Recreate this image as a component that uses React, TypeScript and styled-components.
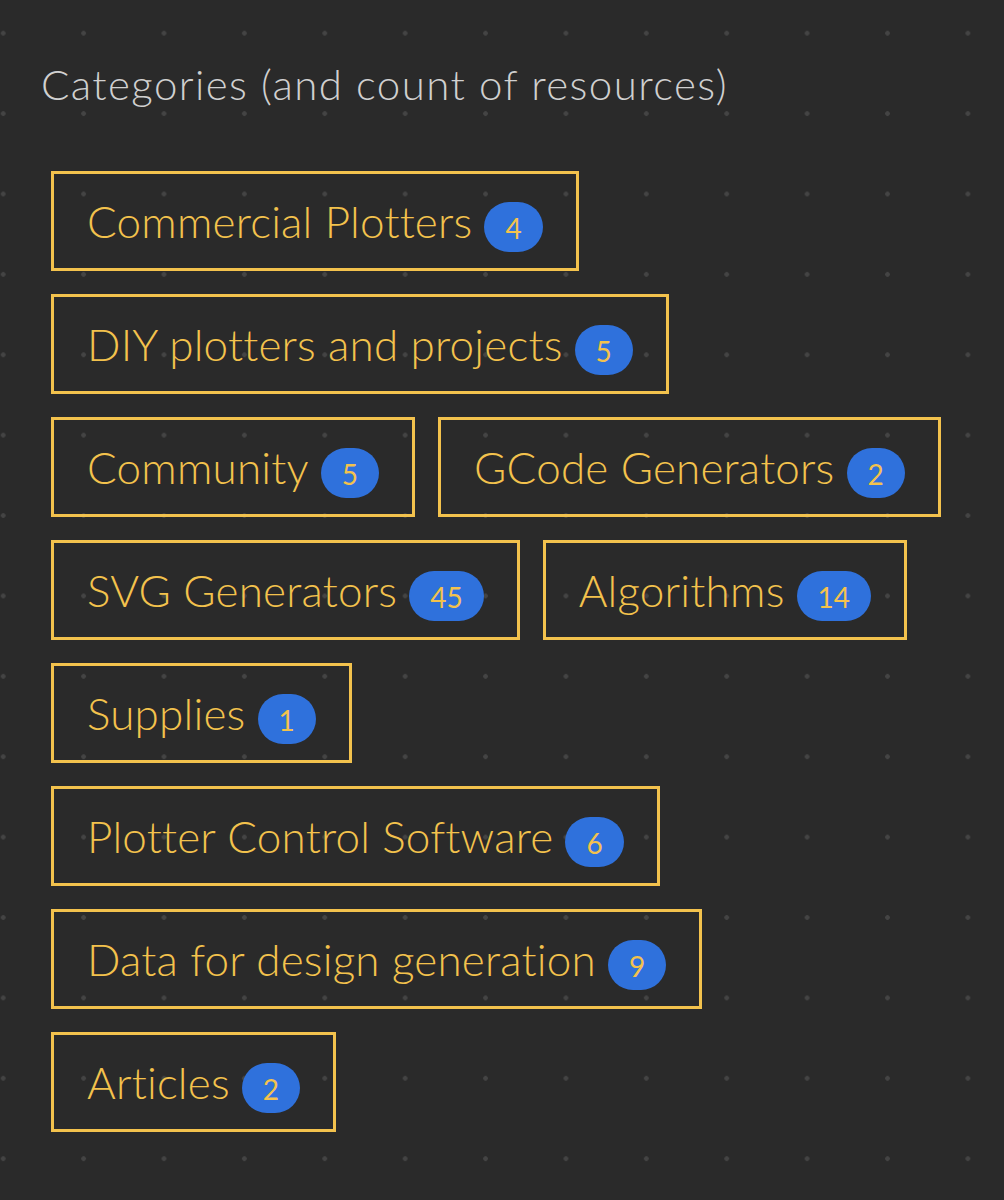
import styled, { createGlobalStyle } from 'styled-components';

const GlobalStyle = createGlobalStyle`
  html, body {
    margin: 0;
    padding: 0;
    background-color: #2a2a2a;
  }
  body {
    font-family: Raleway, Lato, 'Open Sans', sans-serif;
  }
`;

const Page = styled.div`
  min-height: 1200px;
  box-sizing: border-box;
  padding: 56px 0 0 41px;
  background-color: #2a2a2a;
  background-image: radial-gradient(circle, #444444 2px, transparent 2.6px);
  background-size: 80.4px 80.4px;
  background-position: -37px -7px;
`;

const Title = styled.h2`
  margin: 0 0 59px;
  font-family: Lato, sans-serif;
  font-weight: 300;
  font-size: 42px;
  line-height: 56px;
  color: #d0d0d0;
  letter-spacing: 1.4px;
`;

const TagList = styled.div`
  display: flex;
  flex-wrap: wrap;
  gap: 23px;
  width: 900px;
  padding-left: 10px;
`;

const Tag = styled.a`
  display: inline-flex;
  align-items: center;
  box-sizing: border-box;
  height: 100px;
  padding: 0 33px 0 33px;
  border: 3px solid #f3c24d;
  color: #f3c24d;
  font-family: Lato, sans-serif;
  font-weight: 300;
  font-size: 44px;
  letter-spacing: 0.2px;
  text-decoration: none;
  white-space: nowrap;
`;

const Count = styled.span`
  display: inline-flex;
  align-items: center;
  justify-content: center;
  height: 50px;
  margin: 12px 0 0 12px;
  padding: 2px 21px 0;
  box-sizing: border-box;
  border-radius: 25px;
  background-color: #2f71dc;
  color: #f3c24d;
  font-family: Lato, sans-serif;
  font-weight: 400;
  font-size: 28px;
  letter-spacing: 0;
`;

const categories: [string, number][] = [
  ['Commercial Plotters', 4],
  ['DIY plotters and projects', 5],
  ['Community', 5],
  ['GCode Generators', 2],
  ['SVG Generators', 45],
  ['Algorithms', 14],
  ['Supplies', 1],
  ['Plotter Control Software', 6],
  ['Data for design generation', 9],
  ['Articles', 2],
];

export default function App() {
  return (
    <>
      <GlobalStyle />
      <Page>
        <Title>Categories (and count of resources)</Title>
        <TagList>
          {categories.map(([name, count]) => (
            <Tag key={name} href="#">
              {name}
              <Count>{count}</Count>
            </Tag>
          ))}
        </TagList>
      </Page>
    </>
  );
}
